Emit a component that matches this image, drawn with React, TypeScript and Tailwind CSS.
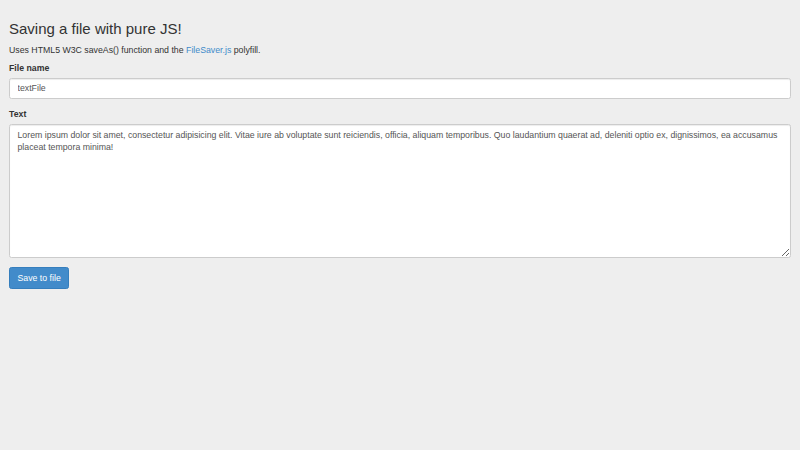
export default function App() {
  return (
    <div
      className="min-h-[450px] w-full bg-[#eeeeee] px-[9px] pt-[21px] text-[#333333]"
      style={{ fontFamily: '"Liberation Sans", Arial, Helvetica, sans-serif' }}
    >
      <h3 className="mb-[6px] text-[15px] font-medium leading-[16.5px]">Saving a file with pure JS!</h3>
      <p className="mb-[6px] text-[8.75px] leading-[12.5px]">
        Uses HTML5 W3C saveAs() function and the{" "}
        <a href="#" className="text-[#428bca]">
          FileSaver.js
        </a>{" "}
        polyfill.
      </p>
      <div className="mb-[9.4px]">
        <label className="mb-[3px] block text-[8.75px] font-bold leading-[12.5px]">File name</label>
        <input
          type="text"
          defaultValue="textFile"
          className="block h-[21.5px] w-full rounded-[2.5px] border border-[#cccccc] bg-white px-[7.5px] py-[3.75px] text-[8.75px] leading-[12.5px] text-[#555555] shadow-[inset_0_1px_1px_rgba(0,0,0,0.075)] outline-none"
        />
      </div>
      <div className="mb-[9.4px]">
        <label className="mb-[3px] block text-[8.75px] font-bold leading-[12.5px]">Text</label>
        <textarea
          defaultValue="Lorem ipsum dolor sit amet, consectetur adipisicing elit. Vitae iure ab voluptate sunt reiciendis, officia, aliquam temporibus. Quo laudantium quaerat ad, deleniti optio ex, dignissimos, ea accusamus placeat tempora minima!"
          className="block h-[134px] w-full resize-y rounded-[2.5px] border border-[#cccccc] bg-white px-[7.5px] py-[3.75px] text-[8.75px] leading-[12.5px] text-[#555555] shadow-[inset_0_1px_1px_rgba(0,0,0,0.075)] outline-none"
        />
      </div>
      <button
        type="button"
        className="block h-[22px] rounded-[2.5px] border border-[#357ebd] bg-[#428bca] px-[7.5px] text-[8.75px] leading-[12.5px] text-white"
      >
        Save to file
      </button>
    </div>
  );
}
